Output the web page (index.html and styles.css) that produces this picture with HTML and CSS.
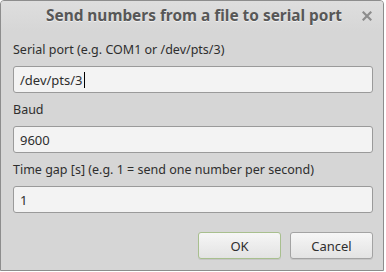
FILE: index.html
```html
<!DOCTYPE html>
<html>
<head>
<meta charset="utf-8">
<link rel="stylesheet" href="styles.css">
</head>
<body>
<div class="window">
  <div class="titlebar">
    <span class="title">Send numbers from a file to serial port</span>
    <span class="close">
      <svg width="10" height="10" viewBox="0 0 10 10"><path d="M1.5 1.5 L8.5 8.5 M8.5 1.5 L1.5 8.5" stroke="#8c8c8c" stroke-width="2.2" stroke-linecap="square"/></svg>
    </span>
  </div>
  <div class="content">
    <div class="field">
      <label class="label">Serial port (e.g. COM1 or /dev/pts/3)</label>
      <div class="input">/dev/pts/3<span class="caret"></span></div>
    </div>
    <div class="field">
      <label class="label">Baud</label>
      <div class="input">9600</div>
    </div>
    <div class="field">
      <label class="label">Time gap [s] (e.g. 1 = send one number per second)</label>
      <div class="input">1</div>
    </div>
    <div class="buttons">
      <div class="button default">OK</div>
      <div class="button">Cancel</div>
    </div>
  </div>
</div>
</body>
</html>
```
FILE: styles.css
```css
html, body {
  margin: 0;
  padding: 0;
  background: #ffffff;
}
body {
  font-family: "Noto Sans", "Open Sans", sans-serif;
  font-size: 12.5px;
  color: #2e2e2e;
}
.window {
  width: 384px;
  height: 271px;
  box-sizing: border-box;
  border: 1px solid #8d8d8d;
  border-radius: 4px 4px 0 0;
  background: #d6d6d6;
  display: flex;
  flex-direction: column;
}
.titlebar {
  height: 30px;
  box-sizing: border-box;
  padding-bottom: 2px;
  display: flex;
  align-items: center;
  justify-content: center;
  position: relative;
  background: linear-gradient(#dedede, #d6d6d6);
  border-radius: 3px 3px 0 0;
}
.title {
  font-weight: bold;
  font-size: 15.4px;
  color: #575757;
  text-shadow: 0 1px 0 rgba(255,255,255,0.6);
  margin-left: 4px;
}
.close {
  position: absolute;
  right: 11px;
  top: 10px;
  width: 10px;
  height: 10px;
  display: flex;
}
.content {
  padding: 10px 10px 0 12px;
  display: flex;
  flex-direction: column;
}
.field {
  display: flex;
  flex-direction: column;
}
.label {
  height: 18px;
  line-height: 18px;
  margin-bottom: 7px;
}
.input {
  height: 27px;
  box-sizing: border-box;
  border: 1px solid #9a9a9a;
  border-radius: 3px;
  background: #f3f3f3;
  padding: 0 6px;
  margin-bottom: 8px;
  display: flex;
  align-items: center;
  font-size: 13px;
}
.caret {
  display: inline-block;
  width: 1px;
  height: 16px;
  background: #000;
  margin-left: 1px;
}
.buttons {
  display: flex;
  justify-content: flex-end;
  gap: 9px;
  margin-top: 11px;
}
.button {
  width: 83px;
  height: 27px;
  box-sizing: border-box;
  border: 1px solid #a3a3a3;
  border-radius: 3px;
  background: linear-gradient(#f6f6f6, #e3e3e3);
  display: flex;
  align-items: center;
  justify-content: center;
  box-shadow: 0 1px 0 rgba(0,0,0,0.08);
  font-size: 13px;
}
.button.default {
  border-color: #a8bf8e;
}
```
